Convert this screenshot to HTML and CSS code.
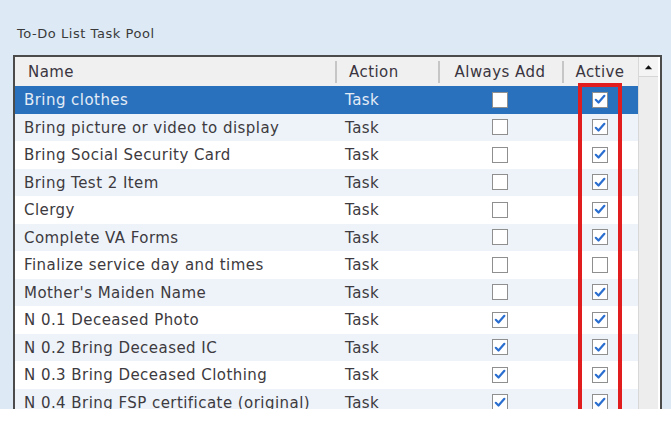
FILE: index.html
```html
<!DOCTYPE html>
<html>
<head>
<meta charset="utf-8">
<link rel="stylesheet" href="styles.css">
</head>
<body>
<div class="page">
  <div class="title">To-Do List Task Pool</div>
  <div class="grid">
    <div class="table">
      <div class="row head">
        <div class="c name">Name</div>
        <div class="c action sep">Action</div>
        <div class="c chk sep">Always Add</div>
        <div class="c chk sep">Active</div>
      </div>
      <div class="row sel">
        <div class="c name">Bring clothes</div><div class="c action">Task</div>
        <div class="c chk"><span class="box"></span></div>
        <div class="c chk"><span class="box on"><svg viewBox="0 0 16 16"><path d="M3.2 8.4 L6.3 11.5 L13 3.8"/></svg></span></div>
      </div>
      <div class="row alt">
        <div class="c name">Bring picture or video to display</div><div class="c action">Task</div>
        <div class="c chk"><span class="box"></span></div>
        <div class="c chk"><span class="box on"><svg viewBox="0 0 16 16"><path d="M3.2 8.4 L6.3 11.5 L13 3.8"/></svg></span></div>
      </div>
      <div class="row">
        <div class="c name">Bring Social Security Card</div><div class="c action">Task</div>
        <div class="c chk"><span class="box"></span></div>
        <div class="c chk"><span class="box on"><svg viewBox="0 0 16 16"><path d="M3.2 8.4 L6.3 11.5 L13 3.8"/></svg></span></div>
      </div>
      <div class="row alt">
        <div class="c name">Bring Test 2 Item</div><div class="c action">Task</div>
        <div class="c chk"><span class="box"></span></div>
        <div class="c chk"><span class="box on"><svg viewBox="0 0 16 16"><path d="M3.2 8.4 L6.3 11.5 L13 3.8"/></svg></span></div>
      </div>
      <div class="row">
        <div class="c name">Clergy</div><div class="c action">Task</div>
        <div class="c chk"><span class="box"></span></div>
        <div class="c chk"><span class="box on"><svg viewBox="0 0 16 16"><path d="M3.2 8.4 L6.3 11.5 L13 3.8"/></svg></span></div>
      </div>
      <div class="row alt">
        <div class="c name">Complete VA Forms</div><div class="c action">Task</div>
        <div class="c chk"><span class="box"></span></div>
        <div class="c chk"><span class="box on"><svg viewBox="0 0 16 16"><path d="M3.2 8.4 L6.3 11.5 L13 3.8"/></svg></span></div>
      </div>
      <div class="row">
        <div class="c name">Finalize service day and times</div><div class="c action">Task</div>
        <div class="c chk"><span class="box"></span></div>
        <div class="c chk"><span class="box"></span></div>
      </div>
      <div class="row alt">
        <div class="c name">Mother's Maiden Name</div><div class="c action">Task</div>
        <div class="c chk"><span class="box"></span></div>
        <div class="c chk"><span class="box on"><svg viewBox="0 0 16 16"><path d="M3.2 8.4 L6.3 11.5 L13 3.8"/></svg></span></div>
      </div>
      <div class="row">
        <div class="c name">N 0.1 Deceased Photo</div><div class="c action">Task</div>
        <div class="c chk"><span class="box on"><svg viewBox="0 0 16 16"><path d="M3.2 8.4 L6.3 11.5 L13 3.8"/></svg></span></div>
        <div class="c chk"><span class="box on"><svg viewBox="0 0 16 16"><path d="M3.2 8.4 L6.3 11.5 L13 3.8"/></svg></span></div>
      </div>
      <div class="row alt">
        <div class="c name">N 0.2 Bring Deceased IC</div><div class="c action">Task</div>
        <div class="c chk"><span class="box on"><svg viewBox="0 0 16 16"><path d="M3.2 8.4 L6.3 11.5 L13 3.8"/></svg></span></div>
        <div class="c chk"><span class="box on"><svg viewBox="0 0 16 16"><path d="M3.2 8.4 L6.3 11.5 L13 3.8"/></svg></span></div>
      </div>
      <div class="row">
        <div class="c name">N 0.3 Bring Deceased Clothing</div><div class="c action">Task</div>
        <div class="c chk"><span class="box on"><svg viewBox="0 0 16 16"><path d="M3.2 8.4 L6.3 11.5 L13 3.8"/></svg></span></div>
        <div class="c chk"><span class="box on"><svg viewBox="0 0 16 16"><path d="M3.2 8.4 L6.3 11.5 L13 3.8"/></svg></span></div>
      </div>
      <div class="row alt">
        <div class="c name">N 0.4 Bring FSP certificate (original)</div><div class="c action">Task</div>
        <div class="c chk"><span class="box on"><svg viewBox="0 0 16 16"><path d="M3.2 8.4 L6.3 11.5 L13 3.8"/></svg></span></div>
        <div class="c chk"><span class="box on"><svg viewBox="0 0 16 16"><path d="M3.2 8.4 L6.3 11.5 L13 3.8"/></svg></span></div>
      </div>
    </div>
    <div class="scroll">
      <div class="arrow"><svg viewBox="0 0 10 6"><path d="M1 5.5 L5 1 L9 5.5 Z"/></svg></div>
    </div>
  </div>
  <div class="highlight"></div>
</div>
</body>
</html>
```

FILE: styles.css
```css
html, body {
  margin: 0;
  padding: 0;
  background: #ffffff;
}
.page {
  position: relative;
  height: 409px;
  background: #dde9f5;
  font-family: "DejaVu Sans", sans-serif;
  color: #3d3a40;
}
.title {
  padding: 25px 0 0 17px;
  height: 30px;
  box-sizing: border-box;
  font-size: 13px;
  letter-spacing: 0.55px;
  color: #3a3a3a;
  line-height: 18px;
}
.grid {
  margin: 25px 0 0 13px;
  width: 649px;
  height: 379px;
  box-sizing: border-box;
  border: 2px solid #4b4b4b;
  border-bottom: none;
  display: flex;
  overflow: hidden;
  background: #ffffff;
}
.table {
  width: 623px;
  flex: none;
}
.row {
  display: grid;
  grid-template-columns: 320px 103px 124px 76px;
  height: 27.5px;
  align-items: center;
  font-size: 15px;
  letter-spacing: 0.45px;
  background: #ffffff;
}
.row.alt { background: #edf3f9; }
.row.sel { background: #2a71bd; color: #e4ecf6; }
.row.head {
  height: 29px;
  background: #f0f0f0;
  color: #3a3540;
}
.c {
  height: 100%;
  box-sizing: border-box;
  padding-top: 1px;
  display: flex;
  align-items: center;
  white-space: nowrap;
  overflow: hidden;
}
.name { padding-left: 9px; }
.action { padding-left: 10px; }
.head .name { padding-left: 13px; }
.head .action { padding-left: 14px; }
.chk { justify-content: center; padding-top: 0; }
.head .sep {
  background: linear-gradient(#c6c6c6, #c6c6c6) left center / 2px 22px no-repeat;
}
.box {
  width: 16px;
  height: 16px;
  box-sizing: border-box;
  border: 1.5px solid #8f8f8f;
  background: #ffffff;
  display: flex;
  align-items: center;
  justify-content: center;
}
.box svg {
  width: 15px;
  height: 15px;
  fill: none;
  stroke: #2a6ed0;
  stroke-width: 2.5;
  stroke-linecap: round;
  stroke-linejoin: round;
}
.scroll {
  width: 20px;
  flex: none;
  background: #ededed;
  border-left: 1px solid #d8d8d8;
  box-sizing: border-box;
}
.arrow {
  height: 19px;
  display: flex;
  align-items: center;
  justify-content: center;
  background: #f4f4f4;
  border-bottom: 1px solid #d6d6d6;
}
.arrow svg {
  width: 9px;
  height: 6px;
  fill: #111;
}
.highlight {
  position: absolute;
  left: 578px;
  top: 83px;
  width: 44px;
  height: 342px;
  box-sizing: border-box;
  border: 4px solid #e21d1d;
}
```
